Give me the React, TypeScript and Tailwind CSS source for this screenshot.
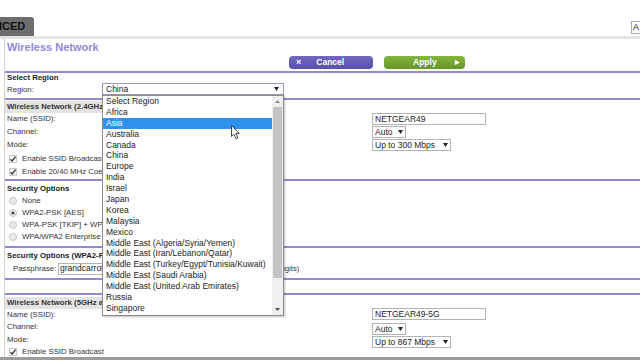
import React from "react";

const REGIONS = [
  "Select Region",
  "Africa",
  "Asia",
  "Australia",
  "Canada",
  "China",
  "Europe",
  "India",
  "Israel",
  "Japan",
  "Korea",
  "Malaysia",
  "Mexico",
  "Middle East (Algeria/Syria/Yemen)",
  "Middle East (Iran/Lebanon/Qatar)",
  "Middle East (Turkey/Egypt/Tunisia/Kuwait)",
  "Middle East (Saudi Arabia)",
  "Middle East (United Arab Emirates)",
  "Russia",
  "Singapore",
];

function Caret() {
  return (
    <svg width="5" height="4" viewBox="0 0 5 4" className="shrink-0">
      <path d="M0 0 H5 L2.5 4 Z" fill="#222" />
    </svg>
  );
}

function Check() {
  return (
    <svg width="8" height="8" viewBox="0 0 8 8" className="shrink-0">
      <rect x="0.5" y="0.5" width="7" height="7" fill="#f4f4f4" stroke="#c8c8c8" />
      <path d="M1.6 4.2 L3.2 5.9 L6.6 1.6" fill="none" stroke="#333" strokeWidth="1.3" />
    </svg>
  );
}

function Radio({ on }: { on?: boolean }) {
  return (
    <svg width="8" height="8" viewBox="0 0 8 8" className="shrink-0">
      <circle cx="4" cy="4" r="3.5" fill="#ececec" stroke="#c4c4c4" />
      {on && <circle cx="4" cy="4" r="1.6" fill="#444" />}
    </svg>
  );
}

function Line() {
  return <div className="h-[2px] bg-[#9189d0]" />;
}

// section header, clipped where the open list covers it
function Header({ children }: { children: React.ReactNode }) {
  return (
    <div className="h-[12px] w-[97px] overflow-hidden whitespace-nowrap bg-[#e3e3e3] pl-[2px] text-[7.8px] font-bold leading-[12px] text-[#333]">
      {children}
    </div>
  );
}

function Box({ children, w }: { children: React.ReactNode; w: string }) {
  return (
    <div
      className={`flex h-[12px] items-center justify-between border border-[#b4b4b4] bg-white px-[2px] text-[8.5px] leading-[10px] text-[#222] ${w}`}
    >
      {children}
    </div>
  );
}

function Row({
  label,
  h,
  children,
}: {
  label: string;
  h: string;
  children?: React.ReactNode;
}) {
  return (
    <div className={`flex items-start ${h}`}>
      <div className="w-[367px] pl-[2px] text-[7.8px] leading-[12px] text-[#333]">{label}</div>
      {children}
    </div>
  );
}

function CheckRow({ label, h, w = "w-[97px]" }: { label: string; h: string; w?: string }) {
  return (
    <div
      className={`flex items-center gap-[5px] overflow-hidden whitespace-nowrap pl-[4px] text-[7.8px] text-[#333] ${h} ${w}`}
    >
      <Check />
      <span>{label}</span>
    </div>
  );
}

function RadioRow({ label, on }: { label: string; on?: boolean }) {
  return (
    <div className="flex h-[12px] w-[97px] items-center gap-[5px] overflow-hidden whitespace-nowrap pl-[4px] text-[7.8px] text-[#333]">
      <Radio on={on} />
      <span>{label}</span>
    </div>
  );
}

export default function App() {
  return (
    <div className="relative h-[360px] w-[640px] overflow-hidden bg-white font-['Liberation_Sans',Arial,sans-serif] text-[#222] select-none">
      <div className="h-[17px]" />
      <div className="flex h-[19px] items-end justify-between">
        <div className="flex h-[19px] w-[34px] items-center rounded-tr-[3px] bg-[#6d6d6d] text-[11px] font-bold text-[#111]">
          <span className="-ml-[1px]">ICED</span>
        </div>
        <div className="mb-[2px] flex h-[13px] w-[9px] items-center border border-r-0 border-[#aaa] pl-[1px] text-[9px] text-[#222]">
          A
        </div>
      </div>
      <div className="h-[3px] bg-[#e3e3e3]" />

      <div className="ml-[4px] h-[318px] border-l border-[#d2d2d2]">
        <div className="h-[16px] pl-[2px] pt-[1px] text-[11px] font-bold leading-[14px] text-[#9389d6]">
          Wireless Network
        </div>

        <div className="flex h-[16px] items-start pt-[1px]">
          <div className="ml-[284px] flex h-[13px] w-[84px] items-center rounded-[4px] bg-gradient-to-b from-[#7168c0] to-[#5950a8] pl-[7px] text-[8.5px] font-bold text-white">
            <span className="text-[9px]">×</span>
            <span className="ml-[15px]">Cancel</span>
          </div>
          <div className="ml-[11px] flex h-[13px] w-[81px] items-center justify-between rounded-[4px] bg-gradient-to-b from-[#86b53f] to-[#66962a] pl-[29px] pr-[5px] text-[8.5px] font-bold text-white">
            <span>Apply</span>
            <span className="text-[6px]">▶</span>
          </div>
        </div>

        <Line />
        <div className="h-[10px] pl-[2px] text-[7.8px] font-bold leading-[10px] text-[#222]">
          Select Region
        </div>
        <div className="flex h-[13px] items-start">
          <div className="w-[97px] pl-[2px] text-[7.8px] leading-[13px] text-[#333]">Region:</div>
          <div className="flex h-[12px] w-[182px] items-center justify-between border border-[#9a9ab8] bg-white pl-[3px] pr-[4px] text-[8.5px] text-[#222]">
            <span>China</span>
            <Caret />
          </div>
        </div>
        <div className="h-[2px]" />
        <Line />

        <div className="h-[1px]" />
        <Header>Wireless Network (2.4GHz a/b/g/n)</Header>
        <Row label="Name (SSID):" h="h-[13px]">
          <Box w="w-[114px]">
            <span>NETGEAR49</span>
          </Box>
        </Row>
        <Row label="Channel:" h="h-[13px]">
          <Box w="w-[34px]">
            <span>Auto</span>
            <Caret />
          </Box>
        </Row>
        <Row label="Mode:" h="h-[13px]">
          <Box w="w-[79px]">
            <span>Up to 300 Mbps</span>
            <Caret />
          </Box>
        </Row>
        <CheckRow label="Enable SSID Broadcast" h="h-[13px]" />
        <CheckRow label="Enable 20/40 MHz Coexistence" h="h-[13px]" />
        <div className="h-[1px]" />
        <Line />

        <div className="h-[2px]" />
        <div className="h-[12px] pl-[2px] text-[7.8px] font-bold leading-[12px] text-[#222]">
          Security Options
        </div>
        <RadioRow label="None" />
        <RadioRow label="WPA2-PSK [AES]" on />
        <RadioRow label="WPA-PSK [TKIP] + WPA2-PSK [AES]" />
        <RadioRow label="WPA/WPA2 Enterprise" />
        <div className="h-[3px]" />
        <Line />

        <div className="h-[2px]" />
        <div className="h-[12px] w-[97px] overflow-hidden whitespace-nowrap pl-[2px] text-[7.8px] font-bold leading-[12px] text-[#222]">
          Security Options (WPA2-PSK)
        </div>
        <div className="flex h-[13px] items-center pl-[8px] text-[7.8px] text-[#333]">
          <span className="w-[45px]">Passphrase:</span>
          <div className="flex h-[12px] w-[122px] items-center border border-[#b4b4b4] pl-[1px] text-[8.5px] text-[#222]">
            grandcarrot123
          </div>
          <span className="ml-[5px]">(8-63 characters or 64 hex digits)</span>
        </div>
        <div className="h-[3px]" />
        <Line />
        <div className="h-[13px]" />
        <Line />

        <div className="h-[2px]" />
        <Header>Wireless Network (5GHz a/n/ac)</Header>
        <Row label="Name (SSID):" h="h-[12px]">
          <div className="-mt-[1px]">
            <Box w="w-[114px]">
              <span>NETGEAR49-5G</span>
            </Box>
          </div>
        </Row>
        <Row label="Channel:" h="h-[13px]">
          <div className="mt-[2px]">
            <Box w="w-[34px]">
              <span>Auto</span>
              <Caret />
            </Box>
          </div>
        </Row>
        <Row label="Mode:" h="h-[13px]">
          <div className="mt-[2px]">
            <Box w="w-[79px]">
              <span>Up to 867 Mbps</span>
              <Caret />
            </Box>
          </div>
        </Row>
        <CheckRow label="Enable SSID Broadcast" h="h-[10px]" w="w-[200px]" />
      </div>
      <div className="h-[3px] bg-[#9c9c9c]" />

      {/* open region list */}
      <div className="absolute left-[102px] top-[95px] flex h-[221px] w-[182px] border border-[#8c8c8c] bg-white shadow-[1px_1px_2px_rgba(0,0,0,0.25)]">
        <div className="flex-1">
          {REGIONS.map((r) => (
            <div
              key={r}
              className={`h-[10.9px] whitespace-nowrap pl-[3px] text-[8.5px] leading-[10.9px] ${
                r === "Asia" ? "bg-[#3090ee] text-white" : "text-[#222]"
              }`}
            >
              {r}
            </div>
          ))}
        </div>
        <div className="flex w-[11px] flex-col items-center bg-[#f0f0f0]">
          <div className="flex h-[11px] items-center">
            <svg width="5" height="3" viewBox="0 0 5 3">
              <path d="M0 3 L2.5 0 L5 3 Z" fill="#8a8a8a" />
            </svg>
          </div>
          <div className="h-[171px] w-[9px] bg-[#c4c4c4]" />
          <div className="flex-1" />
          <div className="flex h-[11px] items-center">
            <svg width="5" height="3" viewBox="0 0 5 3">
              <path d="M0 0 L5 0 L2.5 3 Z" fill="#505050" />
            </svg>
          </div>
        </div>
      </div>

      {/* mouse pointer */}
      <svg
        className="absolute left-[231px] top-[125px]"
        width="10"
        height="15"
        viewBox="0 0 10 15"
      >
        <path
          d="M0.5 0.5 L0.5 11.5 L3 9.2 L5 13.8 L6.8 13 L4.9 8.6 L8.3 8.6 Z"
          fill="#fff"
          stroke="#333"
          strokeWidth="0.9"
          strokeLinejoin="round"
        />
      </svg>
    </div>
  );
}
